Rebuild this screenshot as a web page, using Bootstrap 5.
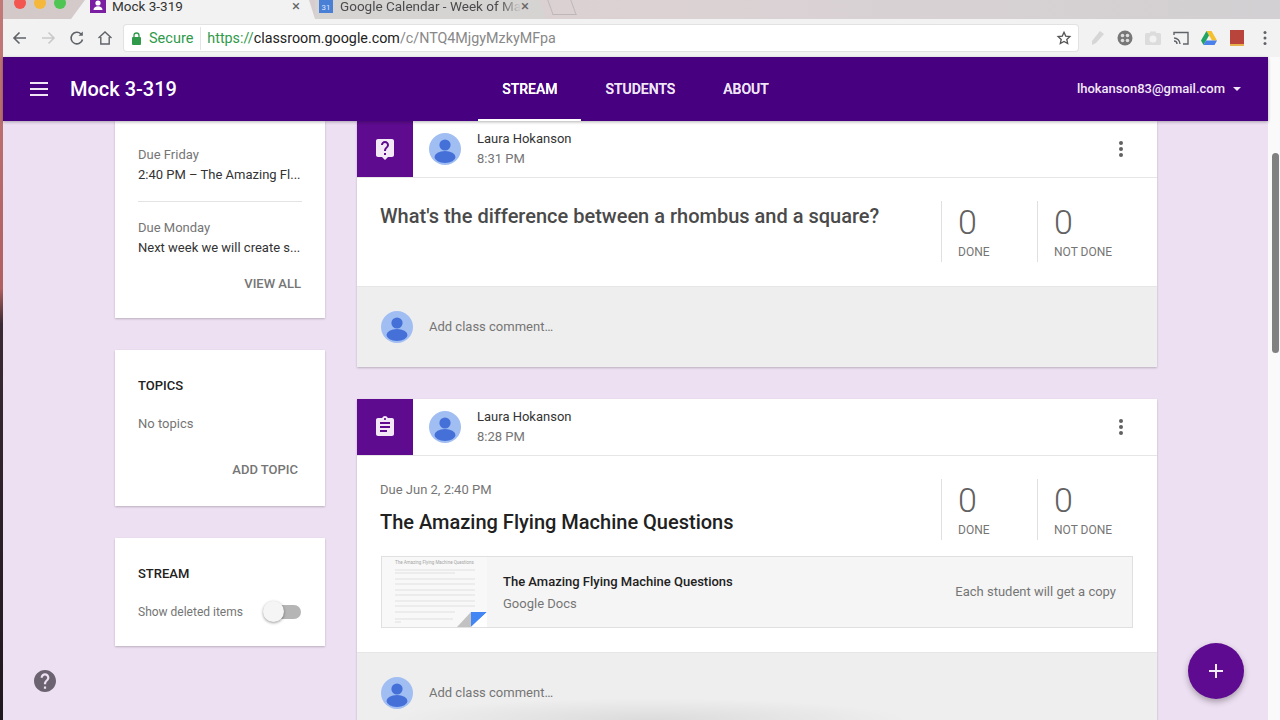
<!DOCTYPE html>
<html lang="en">
<head>
    <meta charset="UTF-8">
    <title>Mock 3-319</title>
    <link href="https://cdn.jsdelivr.net/npm/bootstrap@5.3.0/dist/css/bootstrap.min.css" rel="stylesheet">
    <style>
        html, body { height: 720px; overflow: hidden; }
        body { width: 1280px; font-family: Roboto, "Liberation Sans", sans-serif; font-size: 13px; color: #212121; background: #fff; }
        .desk-strip { width: 3px; flex: none; background: linear-gradient(#c27a78 0, #b0605f 40%, #3a2a33 45%, #20181f 100%); }
        .tab-strip { height: 19px; flex: none; background: linear-gradient(90deg, #d3c9c9, #dcd2d4 50%, #d2d0d2); padding-left: 11px; }
        .traffic { width: 12px; height: 12px; border-radius: 50%; margin-top: -3px; flex: none; }
        .chrome-tab { height: 19px; font-size: 13.5px; line-height: 12px; color: #333; flex: none; clip-path: polygon(14px 0, calc(100% - 6px) 0, 100% 100%, 0 100%); }
        .chrome-tab.is-on { background: #f2f2f2; width: 244px; padding: 0 15px 0 19px; margin-left: 5px; }
        .chrome-tab.is-off { background: #d6d3d3; width: 231px; padding: 0 19px 0 4px; color: #4b4b4b; clip-path: polygon(0 0, calc(100% - 6px) 0, 100% 100%, 0 100%); }
        .tab-title { white-space: nowrap; flex: 1 1 0; }
        .chrome-tab.is-off .tab-title { overflow-x: clip; -webkit-mask-image: linear-gradient(90deg, #000 88%, transparent); mask-image: linear-gradient(90deg, #000 88%, transparent); }
        .tab-close { font-size: 15px; line-height: 16px; margin-top: -2px; height: 16px; color: #666; flex: none; }
        .fav { width: 16px; height: 16px; margin-top: -3px; margin-right: 6px; flex: none; display: block; }
        .chrome-tab.is-off .fav { width: 14px; height: 14px; margin-top: -1px; margin-right: 7px; }
        .new-tab { width: 24px; height: 15px; border: 1px solid #bdb7b8; border-top: 0; transform: skewX(20deg); margin-left: 4px; flex: none; }
        .tool-row { height: 38px; flex: none; background: #f2f2f2; }
        .tool-ico { width: 18px; height: 18px; flex: none; display: block; }
        .omni { width: 954px; height: 26px; margin-left: 10px; background: #fff; border-radius: 3px; box-shadow: 0 0 0 1px #e2e2e2; font-size: 14.3px; flex: none; }
        .sec-text { color: #2f9a4a; font-size: 14.5px; margin-left: 7px; padding-right: 7px; border-right: 1px solid #e4e4e4; line-height: 22px; padding-top: 1px; }
        .url-text { margin-left: 6px; color: #888; padding-top: 1px; }
        .url-text b { font-weight: 400; color: #222; }
        .url-text i { font-style: normal; color: #2f9a4a; }
        .app-bar { height: 64px; flex: none; background: #47007f; color: #fff; position: relative; z-index: 2; box-shadow: 0 1px 3px rgba(0,0,0,.3); }
        .app-side { flex: 1 1 0; }
        .app-title { font-size: 20px; font-weight: 500; margin-left: 22px; }
        .ham { margin-left: 27px; }
        .class-tab { height: 64px; line-height: 64px; padding: 0 24px; font-size: 14px; font-weight: 500; color: #f0e4f6; text-decoration: none; border-bottom: 2px solid transparent; text-shadow: 0 0 .4px currentColor; }
        .class-tab.is-on { border-bottom-color: #fff; color: #fff; }
        .acct { font-size: 13px; font-weight: 500; color: #f3e8f8; margin-right: 27px; }
        .acct.dropdown-toggle::after { margin-left: 8px; vertical-align: 2px; border-top-width: 4px; border-left-width: 4px; border-right-width: 4px; }
        .page-wrap { background: #eee0f3; position: relative; min-height: 0; }
        .col-side { width: 210px; flex: none; margin-left: 112px; }
        .col-feed { width: 800px; flex: none; margin-left: 32px; }
        .gc-card { box-shadow: 0 1px 2px rgba(0,0,0,.22); border-radius: 0; border: 0; flex: none; }
        .side-a { height: 197px; padding: 26px 24px 0 23px; }
        .side-b { height: 156px; padding: 27px 24px 0 23px; margin-top: 32px; }
        .side-c { height: 108px; padding: 27px 24px 0 23px; margin-top: 32px; }
        .due-label { color: #757575; font-size: 13px; line-height: 16px; }
        .due-text { color: #333; font-size: 13px; line-height: 16px; margin-top: 4px; white-space: nowrap; }
        .due-rule { border-top: 1px solid #e3e3e3; margin: 18px -1px 18px 0; }
        .side-link { font-size: 13px; font-weight: 500; color: #757575; line-height: 16px; }
        .side-head { font-size: 13px; font-weight: 500; color: #212121; line-height: 16px; margin-top: 1px; }
        .side-note { font-size: 13px; color: #757575; line-height: 16px; }
        .side-note.is-tight { font-size: 12px; }
        .tog { width: 38px; height: 22px; position: relative; flex: none; }
        .tog-track { position: absolute; left: 8px; right: 0; top: 4px; height: 14px; border-radius: 7px; background: #b5b5b5; }
        .tog-knob { position: absolute; left: 0; top: 0; width: 21px; height: 21px; border-radius: 50%; background: #f5f5f5; box-shadow: 0 1px 3px rgba(0,0,0,.4); }
        .post-card { margin-bottom: 32px; }
        .post-head { height: 57px; border-bottom: 1px solid #e6e6e6; flex: none; }
        .post-type { width: 56px; height: 56px; background: #5e0b8f; flex: none; }
        .post-type svg { width: 24px; height: 24px; fill: #f2e8f6; }
        .avatar { width: 32px; height: 32px; flex: none; display: block; }
        .who { margin-left: 16px; line-height: 20px; }
        .who-name { color: #333; font-size: 13px; }
        .who-time { color: #757575; font-size: 13px; }
        .kebab { width: 4px; margin-left: auto; margin-right: 34px; display: flex; flex-direction: column; gap: 2px; }
        .kebab span { display: block; width: 4px; height: 4px; border-radius: 50%; background: #616161; }
        .post-body { padding: 23px 24px 0 23px; }
        .body-q { height: 108px; }
        .body-a { height: 196px; }
        .q-text { font-size: 20px; font-weight: 500; color: #4a4a4a; line-height: 30px; margin: 0; }
        .a-due { font-size: 13px; color: #757575; line-height: 20px; margin-top: 1px; }
        .a-title { font-size: 20px; font-weight: 500; color: #212121; line-height: 30px; margin: 7px 0 0; }
        .stat { width: 96px; height: 61px; border-left: 1px solid #e0e0e0; padding-left: 16px; padding-top: 1px; flex: none; }
        .stat-num { font-size: 34px; font-weight: 300; color: #616161; line-height: 40px; }
        .stat-lbl { font-size: 12px; color: #757575; line-height: 20px; }
        .attach { height: 72px; margin: 16px 0 0 1px; width: 752px; border: 1px solid #e0e0e0; background: #f5f5f5; }
        .thumb { width: 105px; height: 70px; flex: none; display: block; }
        .att-name { font-size: 13px; font-weight: 500; color: #212121; line-height: 20px; }
        .att-kind { font-size: 13px; color: #757575; line-height: 20px; margin-top: 2px; }
        .att-note { font-size: 13px; color: #757575; margin-left: auto; margin-right: 16px; }
        .comment-bar { background: #eeeeee; border-top: 1px solid #e6e6e6; padding-left: 24px; }
        .comment-q { height: 81px; }
        .comment-a { height: 80px; }
        .comment-hint { font-size: 13px; color: #757575; margin-left: 16px; }
        .help-dot { position: absolute; left: 31px; bottom: 28px; width: 22px; height: 22px; display: block; fill: #6b6470; }
        .fab-add { position: absolute; right: 24px; bottom: 21px; width: 56px; height: 56px; border-radius: 50%; background: #5e0a91; box-shadow: 0 3px 6px rgba(0,0,0,.3); padding: 0; border: 0; z-index: 3; }
        .fab-add svg { width: 24px; height: 24px; fill: #f4ecf8; }
        .video-smudge { position: absolute; left: 380px; bottom: 0; width: 530px; height: 22px; background: radial-gradient(ellipse at 50% 100%, rgba(0,0,0,.08), transparent 70%); pointer-events: none; }
        .scroll-col { width: 12px; flex: none; background: #fafafa; }
        .scroll-thumb { width: 7px; height: 200px; margin: 96px 0 0 4px; border-radius: 4px; background: #808080; }
    </style>
</head>
<body class="d-flex">
    <svg width="0" height="0" class="position-absolute">
        <symbol id="person" viewBox="0 0 32 32">
            <circle cx="16" cy="16" r="16" fill="#a1bef3"/>
            <circle cx="16" cy="12" r="5.600" fill="#4470d8"/>
            <ellipse cx="16" cy="24" rx="10.500" ry="6" fill="#4470d8"/>
        </symbol>
    </svg>

    <div class="desk-strip"></div>
    <div class="d-flex flex-column flex-grow-1" style="min-width:0">
        <!-- tab strip -->
        <div class="tab-strip d-flex">
            <div class="d-flex gap-2">
                <span class="traffic" style="background:#f2564f"></span>
                <span class="traffic" style="background:#f5b83c"></span>
                <span class="traffic" style="background:#4fc554"></span>
            </div>
            <div class="chrome-tab is-on d-flex">
                <svg class="fav" viewBox="0 0 16 16"><rect width="16" height="16" fill="#7b1fa2"/><circle cx="8" cy="6" r="2.600" fill="#fff"/><path d="M3.500 13c0-2.600 2.200-3.800 4.500-3.800s4.500 1.200 4.500 3.800z" fill="#fff"/></svg>
                <span class="tab-title">Mock 3-319</span>
                <span class="tab-close">×</span>
            </div>
            <div class="chrome-tab is-off d-flex">
                <svg class="fav" viewBox="0 0 16 16"><rect width="16" height="16" fill="#4a7fd6"/><text x="8" y="13" font-size="9" fill="#dfe9fa" text-anchor="middle" font-family="Roboto">31</text></svg>
                <span class="tab-title">Google Calendar - Week of Ma</span>
                <span class="tab-close">×</span>
            </div>
            <div class="new-tab"></div>
        </div>
        <!-- toolbar -->
        <div class="tool-row d-flex align-items-center">
            <svg class="tool-ico" style="margin-left:8px" viewBox="0 0 18 18" fill="none" stroke="#5f6368" stroke-width="1.600"><path d="M15 9H3.500M8.500 3.500 3 9l5.500 5.500"/></svg>
            <svg class="tool-ico" style="margin-left:10px" viewBox="0 0 18 18" fill="none" stroke="#c9c9c9" stroke-width="1.600"><path d="M3 9h11.500M9.500 3.500 15 9l-5.500 5.500"/></svg>
            <svg class="tool-ico" style="margin-left:11px" viewBox="0 0 18 18" fill="none" stroke="#5f6368" stroke-width="1.600"><path d="M14.500 10.500A5.800 5.800 0 1 1 13 5"/><path d="M14.800 2.500v4.300h-4.300" fill="#5f6368" stroke="none"/></svg>
            <svg class="tool-ico" style="margin-left:10px" viewBox="0 0 18 18" fill="none" stroke="#5f6368" stroke-width="1.400"><path d="M2.500 9 9 3l6.500 6M4.800 8v7h8.400V8"/></svg>
            <div class="omni d-flex align-items-center">
                <svg width="11" height="13" viewBox="0 0 11 13" style="margin-left:7px;flex:none"><rect x="1" y="5" width="9" height="8" rx="1" fill="#2f9a4a"/><path d="M3 5.500V3.500a2.500 2.500 0 0 1 5 0v2" fill="none" stroke="#2f9a4a" stroke-width="1.300"/></svg>
                <span class="sec-text">Secure</span>
                <span class="url-text"><i>https://</i><b>classroom.google.com</b>/c/NTQ4MjgyMzkyMFpa</span>
                <svg class="ms-auto" width="16" height="16" viewBox="0 0 24 24" style="margin-right:6px" fill="none" stroke="#555" stroke-width="2"><path d="M12 3.500l2.600 5.700 6.200.7-4.600 4.200 1.300 6.100-5.500-3.100-5.500 3.100 1.300-6.100L3.200 9.900l6.200-.7z"/></svg>
            </div>
            <svg class="tool-ico" style="margin-left:10px" viewBox="0 0 18 18"><path d="M12 2l4 3-8 9-4 2 0-4z" fill="#d6d6d6"/></svg>
            <svg class="tool-ico" style="margin-left:10px" viewBox="0 0 18 18"><circle cx="9" cy="9" r="7.500" fill="#777"/><circle cx="6.500" cy="6.500" r="1.800" fill="#ddd"/><circle cx="11.500" cy="6.500" r="1.800" fill="#ddd"/><circle cx="6.500" cy="11.500" r="1.800" fill="#ddd"/><circle cx="11.500" cy="11.500" r="1.800" fill="#ddd"/></svg>
            <svg class="tool-ico" style="margin-left:10px" viewBox="0 0 18 18"><rect x="1" y="4" width="16" height="12" rx="1.500" fill="#dcdcdc"/><circle cx="9" cy="10" r="3.500" fill="#f2f2f2"/><rect x="6" y="2.500" width="6" height="2" fill="#dcdcdc"/></svg>
            <svg class="tool-ico" style="margin-left:10px" viewBox="0 0 18 18" fill="none" stroke="#5f6368" stroke-width="1.400"><path d="M2 6V3.500h14v11.500h-5M2 9a6 6 0 0 1 6 6M2 12a3 3 0 0 1 3 3"/></svg>
            <svg class="tool-ico" style="margin-left:10px" viewBox="0 0 18 18"><path d="M6.500 2h5l5.500 9.500h-5z" fill="#f5c02e"/><path d="M6.500 2 1 11.500 3.500 16l5.500-9.500z" fill="#1fa463"/><path d="M3.500 16h11l2.500-4.500H6z" fill="#4a80ea"/></svg>
            <svg class="tool-ico" style="margin-left:10px" viewBox="0 0 18 18"><rect x="2" y="1" width="14" height="16" fill="#b8443c"/><rect x="2" y="15" width="14" height="2" fill="#e8b04a"/></svg>
            <svg class="tool-ico" style="margin-left:10px" viewBox="0 0 18 18"><circle cx="9" cy="3.500" r="1.500" fill="#5f6368"/><circle cx="9" cy="9" r="1.500" fill="#5f6368"/><circle cx="9" cy="14.500" r="1.500" fill="#5f6368"/></svg>
        </div>

        <div class="d-flex flex-grow-1" style="min-height:0">
            <div class="d-flex flex-column flex-grow-1" style="min-width:0">
                <!-- classroom bar -->
                <nav class="app-bar d-flex align-items-center">
                    <div class="app-side d-flex align-items-center">
                        <svg class="ham" width="18" height="14" viewBox="0 0 18 14" fill="#f0e4f6"><rect width="18" height="2"/><rect y="6" width="18" height="2"/><rect y="12" width="18" height="2"/></svg>
                        <span class="app-title">Mock 3-319</span>
                    </div>
                    <div class="d-flex">
                        <a class="class-tab is-on" href="#">STREAM</a>
                        <a class="class-tab" href="#">STUDENTS</a>
                        <a class="class-tab" href="#">ABOUT</a>
                    </div>
                    <div class="app-side d-flex justify-content-end">
                        <span class="acct dropdown-toggle">lhokanson83@gmail.com</span>
                    </div>
                </nav>

                <main class="page-wrap d-flex flex-grow-1 overflow-hidden">
                    <div class="col-side d-flex flex-column">
                        <div class="card gc-card side-a">
                            <div class="due-label">Due Friday</div>
                            <div class="due-text">2:40 PM – The Amazing Fl...</div>
                            <div class="due-rule"></div>
                            <div class="due-label">Due Monday</div>
                            <div class="due-text">Next week we will create s...</div>
                            <div class="side-link text-end" style="margin-top:20px">VIEW ALL</div>
                        </div>
                        <div class="card gc-card side-b">
                            <div class="side-head">TOPICS</div>
                            <div class="side-note" style="margin-top:22px">No topics</div>
                            <div class="side-link text-end" style="margin-top:30px;padding-right:3px">ADD TOPIC</div>
                        </div>
                        <div class="card gc-card side-c">
                            <div class="side-head">STREAM</div>
                            <div class="d-flex align-items-center justify-content-between" style="margin-top:19px">
                                <span class="side-note is-tight">Show deleted items</span>
                                <span class="tog"><span class="tog-track"></span><span class="tog-knob"></span></span>
                            </div>
                        </div>
                    </div>

                    <div class="col-feed">
                        <div class="card gc-card post-card">
                            <div class="post-head d-flex align-items-center">
                                <div class="post-type d-flex align-items-center justify-content-center align-self-start">
                                    <svg viewBox="0 0 24 24"><path d="M19 2H5c-1.110 0-2 .9-2 2v14c0 1.100.89 2 2 2h4l3 3 3-3h4c1.100 0 2-.9 2-2V4c0-1.100-.9-2-2-2zm-6 16h-2v-2h2v2zm2.070-7.750l-.9.920C13.450 11.900 13 12.500 13 14h-2v-.5c0-1.100.45-2.100 1.170-2.830l1.240-1.260c.37-.36.59-.86.59-1.410 0-1.100-.9-2-2-2s-2 .9-2 2H8c0-2.210 1.790-4 4-4s4 1.790 4 4c0 .88-.36 1.680-.93 2.250z"/></svg>
                                </div>
                                <svg class="avatar" style="margin-left:16px"><use href="#person"/></svg>
                                <div class="who">
                                    <div class="who-name">Laura Hokanson</div>
                                    <div class="who-time">8:31 PM</div>
                                </div>
                                <div class="kebab"><span></span><span></span><span></span></div>
                            </div>
                            <div class="post-body body-q d-flex">
                                <p class="q-text flex-grow-1">What's the difference between a rhombus and a square?</p>
                                <div class="stat"><div class="stat-num">0</div><div class="stat-lbl">DONE</div></div>
                                <div class="stat"><div class="stat-num">0</div><div class="stat-lbl">NOT DONE</div></div>
                            </div>
                            <div class="comment-bar comment-q d-flex align-items-center">
                                <svg class="avatar"><use href="#person"/></svg>
                                <span class="comment-hint">Add class comment…</span>
                            </div>
                        </div>

                        <div class="card gc-card post-card">
                            <div class="post-head d-flex align-items-center">
                                <div class="post-type d-flex align-items-center justify-content-center align-self-start">
                                    <svg viewBox="0 0 24 24"><path d="M19 3h-4.180C14.400 1.840 13.300 1 12 1c-1.300 0-2.400.84-2.820 2H5c-1.100 0-2 .9-2 2v14c0 1.100.9 2 2 2h14c1.100 0 2-.9 2-2V5c0-1.100-.9-2-2-2zm-7 0c.55 0 1 .45 1 1s-.45 1-1 1-1-.45-1-1 .45-1 1-1zm2 14H7v-2h7v2zm3-4H7v-2h10v2zm0-4H7V7h10v2z"/></svg>
                                </div>
                                <svg class="avatar" style="margin-left:16px"><use href="#person"/></svg>
                                <div class="who">
                                    <div class="who-name">Laura Hokanson</div>
                                    <div class="who-time">8:28 PM</div>
                                </div>
                                <div class="kebab"><span></span><span></span><span></span></div>
                            </div>
                            <div class="post-body body-a">
                                <div class="d-flex">
                                    <div class="flex-grow-1">
                                        <div class="a-due">Due Jun 2, 2:40 PM</div>
                                        <h2 class="a-title">The Amazing Flying Machine Questions</h2>
                                    </div>
                                    <div class="stat"><div class="stat-num">0</div><div class="stat-lbl">DONE</div></div>
                                    <div class="stat"><div class="stat-num">0</div><div class="stat-lbl">NOT DONE</div></div>
                                </div>
                                <div class="attach d-flex align-items-center">
                                    <svg class="thumb" viewBox="0 0 105 70">
                                        <rect width="105" height="70" fill="#f8f8f8"/>
                                        <text x="13" y="7" font-size="4.500" fill="#a5a5a5" font-family="Roboto">The Amazing Flying Machine Questions</text>
                                        <g stroke="#e0e0e0" stroke-width="1">
                                            <path d="M13 13h80M13 16h60M13 22h80M13 27h80M13 33h80M13 38h80M13 44h80M13 49h80M13 55h60M13 62h58M13 65h6"/>
                                        </g>
                                        <path d="M75 70 89 55v15z" fill="#c2c2c2"/>
                                        <path d="M89 55h16L89 70z" fill="#4285f4"/>
                                        <path d="M105 55v15H89z" fill="#fff"/>
                                    </svg>
                                    <div style="margin-left:16px;padding-top:1px">
                                        <div class="att-name">The Amazing Flying Machine Questions</div>
                                        <div class="att-kind">Google Docs</div>
                                    </div>
                                    <span class="att-note">Each student will get a copy</span>
                                </div>
                            </div>
                            <div class="comment-bar comment-a d-flex align-items-center">
                                <svg class="avatar"><use href="#person"/></svg>
                                <span class="comment-hint">Add class comment…</span>
                            </div>
                        </div>
                    </div>

                    <div class="video-smudge"></div>
                    <svg class="help-dot" viewBox="2 2 20 20"><path d="M12 2C6.480 2 2 6.480 2 12s4.480 10 10 10 10-4.480 10-10S17.520 2 12 2zm1 17h-2v-2h2v2zm2.070-7.750l-.9.920C13.450 12.900 13 13.500 13 15h-2v-.5c0-1.100.45-2.100 1.170-2.830l1.240-1.260c.37-.36.59-.86.59-1.410 0-1.100-.9-2-2-2s-2 .9-2 2H8c0-2.210 1.790-4 4-4s4 1.790 4 4c0 .88-.36 1.680-.93 2.250z"/></svg>
                    <button class="btn fab-add d-flex align-items-center justify-content-center" type="button">
                        <svg viewBox="0 0 24 24"><path d="M19 13h-6v6h-2v-6H5v-2h6V5h2v6h6v2z"/></svg>
                    </button>
                </main>
            </div>
            <div class="scroll-col"><div class="scroll-thumb"></div></div>
        </div>
    </div>
    <script src="https://cdn.jsdelivr.net/npm/bootstrap@5.3.0/dist/js/bootstrap.bundle.min.js"></script>
</body>
</html>
